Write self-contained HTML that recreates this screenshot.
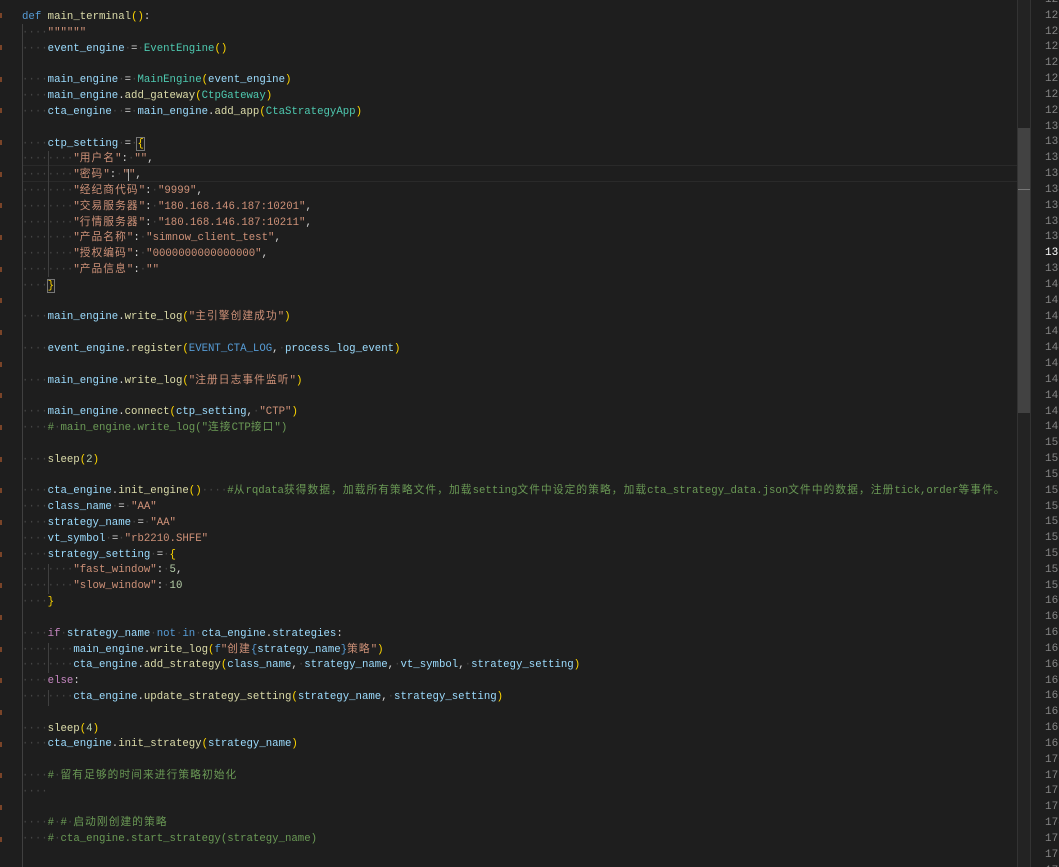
<!DOCTYPE html>
<html><head><meta charset="utf-8">
<style>
html,body{margin:0;padding:0;background:#1e1e1e;width:1059px;height:867px;overflow:hidden;position:relative}
#code{position:absolute;left:22px;top:10px;font-family:"Liberation Mono","Noto Sans CJK SC",monospace;font-size:10.7px;color:#d4d4d4}
.l{height:15.82px;line-height:15.82px;white-space:pre}
i{font-style:normal;color:#454545}
.c{letter-spacing:1.1px}
.v{color:#9cdcfe}.f{color:#dcdcaa}.t{color:#4ec9b0}.s{color:#ce9178}.k{color:#569cd6}.p{color:#c586c0}
.m{color:#6a9955}.n{color:#b5cea8}.y{color:#ffd700}.o{color:#da70d6}
.g{position:absolute;width:1px;background:#404040}
.act{position:absolute;left:22px;right:29px;top:165px;height:15px;border-top:1px solid #2a2a2a;border-bottom:1px solid #2a2a2a}
#nums{position:absolute;left:1045px;top:-7px;font-family:"Liberation Mono",monospace;font-size:11px;color:#858585}
#nums div{height:15.84px;line-height:15.84px}
.mk{position:absolute;left:0;width:2px;height:5px;background:#7a4428}
</style></head><body>
<div class="act"></div>
<div class="g" style="left:22px;top:24px;height:843px"></div>
<div class="g" style="left:48px;top:151px;height:126px"></div>
<div class="g" style="left:48px;top:564px;height:30px"></div>
<div class="g" style="left:48px;top:643px;height:30px"></div>
<div class="g" style="left:48px;top:690px;height:16px"></div>
<div style="position:absolute;left:1017px;top:0;width:1px;height:867px;background:#333"></div>
<div style="position:absolute;left:1018px;top:0;width:12px;height:867px;background:#232323"></div>
<div style="position:absolute;left:1030px;top:0;width:1px;height:867px;background:#333"></div>
<div style="position:absolute;left:1018px;top:128px;width:12px;height:285px;background:#424242"></div>
<div style="position:absolute;left:1018px;top:189px;width:12px;height:1px;background:#777"></div>
<div id="code">
<div class="l"><span class="k">def</span> <span class="f">main_terminal</span><span class="y">()</span>:</div>
<div class="l"><i>····</i><span class="s">""""""</span></div>
<div class="l"><i>····</i><span class="v">event_engine</span><i>·</i>=<i>·</i><span class="t">EventEngine</span><span class="y">()</span></div>
<div class="l"></div>
<div class="l"><i>····</i><span class="v">main_engine</span><i>·</i>=<i>·</i><span class="t">MainEngine</span><span class="y">(</span><span class="v">event_engine</span><span class="y">)</span></div>
<div class="l"><i>····</i><span class="v">main_engine</span>.<span class="f">add_gateway</span><span class="y">(</span><span class="t">CtpGateway</span><span class="y">)</span></div>
<div class="l"><i>····</i><span class="v">cta_engine</span><i>··</i>=<i>·</i><span class="v">main_engine</span>.<span class="f">add_app</span><span class="y">(</span><span class="t">CtaStrategyApp</span><span class="y">)</span></div>
<div class="l"></div>
<div class="l"><i>····</i><span class="v">ctp_setting</span><i>·</i>=<i>·</i><span class="y" style="outline:1px solid #777">{</span></div>
<div class="l"><i>········</i><span class="s">"<span class="c">用户名</span>"</span>:<i>·</i><span class="s">""</span>,</div>
<div class="l"><i>········</i><span class="s">"<span class="c">密码</span>"</span>:<i>·</i><span class="s">"<span style="border-left:1px solid #aeafad;margin-left:-1px"></span>"</span>,</div>
<div class="l"><i>········</i><span class="s">"<span class="c">经纪商代码</span>"</span>:<i>·</i><span class="s">"9999"</span>,</div>
<div class="l"><i>········</i><span class="s">"<span class="c">交易服务器</span>"</span>:<i>·</i><span class="s">"180.168.146.187:10201"</span>,</div>
<div class="l"><i>········</i><span class="s">"<span class="c">行情服务器</span>"</span>:<i>·</i><span class="s">"180.168.146.187:10211"</span>,</div>
<div class="l"><i>········</i><span class="s">"<span class="c">产品名称</span>"</span>:<i>·</i><span class="s">"simnow_client_test"</span>,</div>
<div class="l"><i>········</i><span class="s">"<span class="c">授权编码</span>"</span>:<i>·</i><span class="s">"0000000000000000"</span>,</div>
<div class="l"><i>········</i><span class="s">"<span class="c">产品信息</span>"</span>:<i>·</i><span class="s">""</span></div>
<div class="l"><i>····</i><span class="y" style="outline:1px solid #777">}</span></div>
<div class="l"></div>
<div class="l"><i>····</i><span class="v">main_engine</span>.<span class="f">write_log</span><span class="y">(</span><span class="s">"<span class="c">主引擎创建成功</span>"</span><span class="y">)</span></div>
<div class="l"></div>
<div class="l"><i>····</i><span class="v">event_engine</span>.<span class="f">register</span><span class="y">(</span><span class="k">EVENT_CTA_LOG</span>,<i>·</i><span class="v">process_log_event</span><span class="y">)</span></div>
<div class="l"></div>
<div class="l"><i>····</i><span class="v">main_engine</span>.<span class="f">write_log</span><span class="y">(</span><span class="s">"<span class="c">注册日志事件监听</span>"</span><span class="y">)</span></div>
<div class="l"></div>
<div class="l"><i>····</i><span class="v">main_engine</span>.<span class="f">connect</span><span class="y">(</span><span class="v">ctp_setting</span>,<i>·</i><span class="s">"CTP"</span><span class="y">)</span></div>
<div class="l"><i>····</i><span class="m">#<i>·</i>main_engine.write_log("<span class="c">连接</span>CTP<span class="c">接口</span>")</span></div>
<div class="l"></div>
<div class="l"><i>····</i><span class="f">sleep</span><span class="y">(</span><span class="n">2</span><span class="y">)</span></div>
<div class="l"></div>
<div class="l"><i>····</i><span class="v">cta_engine</span>.<span class="f">init_engine</span><span class="y">()</span><i>····</i><span class="m">#<span class="c">从</span>rqdata<span class="c">获得数据，加载所有策略文件，加载</span>setting<span class="c">文件中设定的策略，加载</span>cta_strategy_data.json<span class="c">文件中的数据，注册</span>tick,order<span class="c">等事件。</span></span></div>
<div class="l"><i>····</i><span class="v">class_name</span><i>·</i>=<i>·</i><span class="s">"AA"</span></div>
<div class="l"><i>····</i><span class="v">strategy_name</span><i>·</i>=<i>·</i><span class="s">"AA"</span></div>
<div class="l"><i>····</i><span class="v">vt_symbol</span><i>·</i>=<i>·</i><span class="s">"rb2210.SHFE"</span></div>
<div class="l"><i>····</i><span class="v">strategy_setting</span><i>·</i>=<i>·</i><span class="y">{</span></div>
<div class="l"><i>········</i><span class="s">"fast_window"</span>:<i>·</i><span class="n">5</span>,</div>
<div class="l"><i>········</i><span class="s">"slow_window"</span>:<i>·</i><span class="n">10</span></div>
<div class="l"><i>····</i><span class="y">}</span></div>
<div class="l"></div>
<div class="l"><i>····</i><span class="p">if</span><i>·</i><span class="v">strategy_name</span><i>·</i><span class="k">not</span><i>·</i><span class="k">in</span><i>·</i><span class="v">cta_engine</span>.<span class="v">strategies</span>:</div>
<div class="l"><i>········</i><span class="v">main_engine</span>.<span class="f">write_log</span><span class="y">(</span><span class="k">f</span><span class="s">"<span class="c">创建</span></span><span class="k">{</span><span class="v">strategy_name</span><span class="k">}</span><span class="s"><span class="c">策略</span>"</span><span class="y">)</span></div>
<div class="l"><i>········</i><span class="v">cta_engine</span>.<span class="f">add_strategy</span><span class="y">(</span><span class="v">class_name</span>,<i>·</i><span class="v">strategy_name</span>,<i>·</i><span class="v">vt_symbol</span>,<i>·</i><span class="v">strategy_setting</span><span class="y">)</span></div>
<div class="l"><i>····</i><span class="p">else</span>:</div>
<div class="l"><i>········</i><span class="v">cta_engine</span>.<span class="f">update_strategy_setting</span><span class="y">(</span><span class="v">strategy_name</span>,<i>·</i><span class="v">strategy_setting</span><span class="y">)</span></div>
<div class="l"></div>
<div class="l"><i>····</i><span class="f">sleep</span><span class="y">(</span><span class="n">4</span><span class="y">)</span></div>
<div class="l"><i>····</i><span class="v">cta_engine</span>.<span class="f">init_strategy</span><span class="y">(</span><span class="v">strategy_name</span><span class="y">)</span></div>
<div class="l"></div>
<div class="l"><i>····</i><span class="m">#<i>·</i><span class="c">留有足够的时间来进行策略初始化</span></span></div>
<div class="l"><i>····</i></div>
<div class="l"></div>
<div class="l"><i>····</i><span class="m">#<i>·</i>#<i>·</i><span class="c">启动刚创建的策略</span></span></div>
<div class="l"><i>····</i><span class="m">#<i>·</i>cta_engine.start_strategy(strategy_name)</span></div>
</div>
<div id="nums">
<div>122</div><div>123</div><div>124</div><div>125</div><div>126</div><div>127</div><div>128</div><div>129</div>
<div>130</div><div>131</div><div>132</div><div>133</div><div>134</div><div>135</div><div>136</div><div>137</div><div style="color:#fff">138</div><div>139</div>
<div>140</div><div>141</div><div>142</div><div>143</div><div>144</div><div>145</div><div>146</div><div>147</div><div>148</div><div>149</div>
<div>150</div><div>151</div><div>152</div><div>153</div><div>154</div><div>155</div><div>156</div><div>157</div><div>158</div><div>159</div>
<div>160</div><div>161</div><div>162</div><div>163</div><div>164</div><div>165</div><div>166</div><div>167</div><div>168</div><div>169</div>
<div>170</div><div>171</div><div>172</div><div>173</div><div>174</div><div>175</div><div>176</div><div>177</div><div>178</div>
</div>
<div class="mk" style="top:13px"></div><div class="mk" style="top:45px"></div><div class="mk" style="top:77px"></div><div class="mk" style="top:108px"></div><div class="mk" style="top:140px"></div><div class="mk" style="top:172px"></div><div class="mk" style="top:203px"></div><div class="mk" style="top:235px"></div><div class="mk" style="top:267px"></div><div class="mk" style="top:298px"></div><div class="mk" style="top:330px"></div><div class="mk" style="top:362px"></div><div class="mk" style="top:393px"></div><div class="mk" style="top:425px"></div><div class="mk" style="top:457px"></div><div class="mk" style="top:488px"></div><div class="mk" style="top:520px"></div><div class="mk" style="top:552px"></div><div class="mk" style="top:583px"></div><div class="mk" style="top:615px"></div><div class="mk" style="top:647px"></div><div class="mk" style="top:678px"></div><div class="mk" style="top:710px"></div><div class="mk" style="top:742px"></div><div class="mk" style="top:773px"></div><div class="mk" style="top:805px"></div><div class="mk" style="top:837px"></div>
</body></html>
